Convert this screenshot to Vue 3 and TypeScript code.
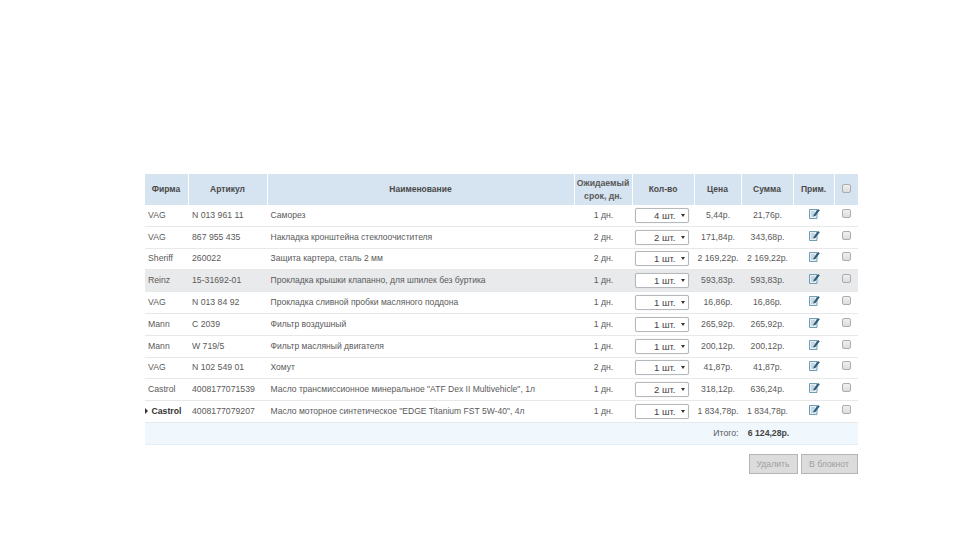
<script setup lang="ts">
interface Row { firm: string; art: string; name: string; days: string; qty: string; price: string; sum: string; hl?: boolean; cur?: boolean }
const rows: Row[] = [
  { firm: 'VAG', art: 'N 013 961 11', name: 'Саморез', days: '1 дн.', qty: '4 шт.', price: '5,44р.', sum: '21,76р.' },
  { firm: 'VAG', art: '867 955 435', name: 'Накладка кронштейна стеклоочистителя', days: '2 дн.', qty: '2 шт.', price: '171,84р.', sum: '343,68р.' },
  { firm: 'Sheriff', art: '260022', name: 'Защита картера, сталь 2 мм', days: '2 дн.', qty: '1 шт.', price: '2 169,22р.', sum: '2 169,22р.' },
  { firm: 'Reinz', art: '15-31692-01', name: 'Прокладка крышки клапанно, для шпилек без буртика', days: '1 дн.', qty: '1 шт.', price: '593,83р.', sum: '593,83р.', hl: true },
  { firm: 'VAG', art: 'N 013 84 92', name: 'Прокладка сливной пробки масляного поддона', days: '1 дн.', qty: '1 шт.', price: '16,86р.', sum: '16,86р.' },
  { firm: 'Mann', art: 'C 2039', name: 'Фильтр воздушный', days: '1 дн.', qty: '1 шт.', price: '265,92р.', sum: '265,92р.' },
  { firm: 'Mann', art: 'W 719/5', name: 'Фильтр масляный двигателя', days: '1 дн.', qty: '1 шт.', price: '200,12р.', sum: '200,12р.' },
  { firm: 'VAG', art: 'N 102 549 01', name: 'Хомут', days: '2 дн.', qty: '1 шт.', price: '41,87р.', sum: '41,87р.' },
  { firm: 'Castrol', art: '4008177071539', name: 'Масло трансмиссионное минеральное "ATF Dex II Multivehicle", 1л', days: '1 дн.', qty: '2 шт.', price: '318,12р.', sum: '636,24р.' },
  { firm: 'Castrol', art: '4008177079207', name: 'Масло моторное синтетическое "EDGE Titanium FST 5W-40", 4л', days: '1 дн.', qty: '1 шт.', price: '1 834,78р.', sum: '1 834,78р.', cur: true },
]
</script>

<template>
  <div class="page">
    <table class="grid">
      <colgroup>
        <col class="c1" /><col class="c2" /><col class="c3" /><col class="c4" /><col class="c5" /><col class="c6" /><col class="c7" /><col class="c8" /><col class="c9" />
      </colgroup>
      <thead>
        <tr>
          <th>Фирма</th>
          <th>Артикул</th>
          <th>Наименование</th>
          <th class="tight">Ожидаемый срок, дн.</th>
          <th>Кол-во</th>
          <th>Цена</th>
          <th>Сумма</th>
          <th>Прим.</th>
          <th><span class="check"></span></th>
        </tr>
      </thead>
      <tbody>
        <tr v-for="(r, i) in rows" :key="i" :class="{ hl: r.hl }">
          <td class="left" :class="{ cur: r.cur }">
            <span v-if="r.cur" class="marker"></span>{{ r.firm }}
          </td>
          <td class="left">{{ r.art }}</td>
          <td class="left name">{{ r.name }}</td>
          <td>{{ r.days }}</td>
          <td>
            <div class="select">
              <span class="val">{{ r.qty }}</span>
              <span class="arrow"></span>
            </div>
          </td>
          <td>{{ r.price }}</td>
          <td>{{ r.sum }}</td>
          <td>
            <svg class="note" width="11" height="11" viewBox="0 0 11 11">
              <path d="M0.5 1.5h7.5v9h-7.5z" fill="#e8eff4" stroke="#6f9db6" />
              <path d="M2 4h4M2 6h3M2 8h3" stroke="#8fb4c8" stroke-width="0.8" />
              <path d="M4.5 7L9 1 10.8 2.2 6.4 8 4.4 8.6z" fill="#2f5f78" />
            </svg>
          </td>
          <td><span class="check"></span></td>
        </tr>
        <tr class="total">
          <td colspan="6" class="label">Итого:</td>
          <td class="amount">6 124,28р.</td>
          <td colspan="2"></td>
        </tr>
      </tbody>
    </table>
    <div class="actions">
      <button class="btn" type="button">Удалить</button>
      <button class="btn wide" type="button">В блокнот</button>
    </div>
  </div>
</template>

<style>
html, body { background: #fff; }
</style>

<style scoped>
.page {
  width: 713px;
  margin-left: 144.5px;
  padding-top: 174px;
  font-family: "Liberation Sans", Arial, sans-serif;
  font-size: 8.7px;
  color: #5a5a5a;
}
.grid {
  width: 713px;
  table-layout: fixed;
  border-collapse: separate;
  border-spacing: 0;
}
.c1 { width: 44px; }
.c2 { width: 79px; }
.c3 { width: 307px; }
.c4 { width: 58px; }
.c5 { width: 62px; }
.c6 { width: 47px; }
.c7 { width: 52px; }
.c8 { width: 41px; }
.c9 { width: 23px; }
th {
  height: 31px;
  padding: 0;
  background: #d6e3f0;
  border-right: 1px solid #fff;
  font-weight: bold;
  font-size: 8.5px;
  line-height: 12.5px;
  color: #4a4a4a;
  text-align: center;
  vertical-align: middle;
}
th:last-child { border-right: 0; }
th.tight { color: #5a5a5a; font-size: 8.7px; }
td {
  padding: 0 0 1px;
  box-sizing: border-box;
  border-bottom: 1px solid #e6e8ea;
  text-align: center;
  vertical-align: middle;
  white-space: nowrap;
}
tbody tr td { height: 21.8px; }
td.left { text-align: left; padding-left: 3.5px; }
td.name { padding-left: 3px; font-size: 8.55px; }
tr.hl td { background: #e9eaec; }
td.cur { color: #333; font-weight: bold; padding-left: 0; }
.marker {
  display: inline-block;
  width: 0;
  height: 0;
  border-left: 3px solid #333;
  border-top: 3px solid transparent;
  border-bottom: 3px solid transparent;
  margin-right: 4px;
}
.select {
  box-sizing: border-box;
  display: flex;
  align-items: center;
  justify-content: flex-end;
  width: 54px;
  height: 15px;
  margin: 1px 0 0 2px;
  padding-right: 3px;
  background: #fff;
  border: 1px solid #b4b8bb;
  border-radius: 2px;
  box-shadow: 0 0 1px #c8ccd0;
  font-size: 9.5px;
  color: #444;
}
.arrow {
  width: 0;
  height: 0;
  margin-left: 5px;
  border-top: 3px solid #333;
  border-left: 2.5px solid transparent;
  border-right: 2.5px solid transparent;
}
.note { display: block; margin: -3px auto 0; }
.check {
  box-sizing: border-box;
  display: block;
  width: 9px;
  height: 9px;
  margin: -3px auto 0;
  background: linear-gradient(#f0f0f0, #dcdcdc);
  border: 1px solid #acacac;
  border-radius: 2px;
}
tr.total td {
  height: 22px;
  background: #f0f7fd;
  border-bottom: 1px solid #e6eef5;
}
td.label { text-align: right; padding-right: 3px; }
td.amount { font-weight: bold; color: #444; padding-left: 2px; }
.actions {
  display: flex;
  justify-content: flex-end;
  gap: 3px;
  margin-top: 9px;
}
.btn {
  box-sizing: border-box;
  height: 20px;
  width: 49px;
  padding: 0;
  background: #dcdcdc;
  border: 1px solid #b5b5b5;
  font-family: inherit;
  font-size: 8.7px;
  color: #a0a0a0;
}
.btn.wide { width: 57px; }
</style>
